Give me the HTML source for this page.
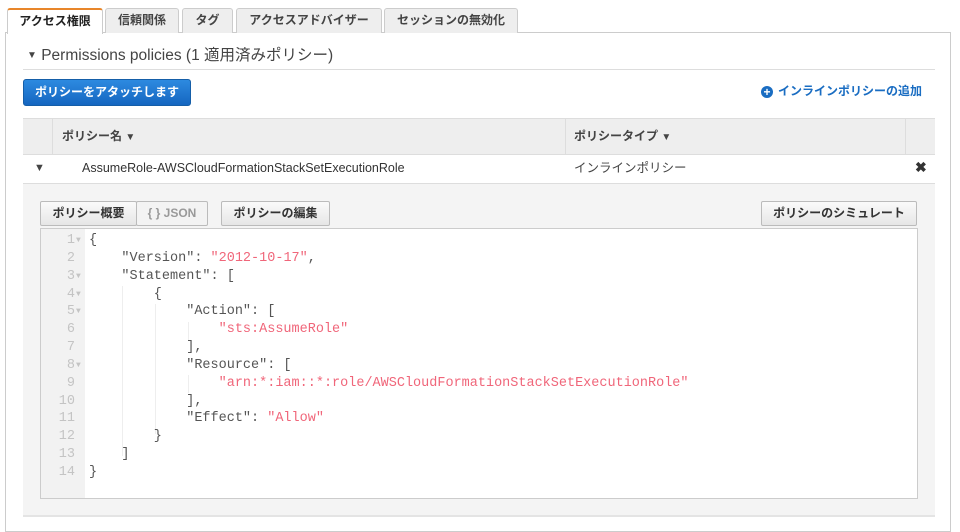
<!DOCTYPE html><html><head><meta charset="utf-8"><style>
*{box-sizing:border-box;margin:0;padding:0}
body{width:960px;height:526px;background:#fff;font-family:"Liberation Sans","Noto Sans CJK JP",sans-serif;color:#333;position:relative;overflow:hidden;font-size:13px;line-height:1.2}
.abs{position:absolute}
.tab{position:absolute;top:8px;height:25px;border:1px solid #ccc;border-bottom:none;background:#eee;border-radius:3px 3px 0 0;font-size:12px;font-weight:bold;color:#444;text-align:center;line-height:23px}
.btn{position:absolute;height:25px;border:1px solid #bbb;border-radius:2px;background:linear-gradient(#fafafa,#e6e6e6);font-size:12px;font-weight:bold;color:#333;text-align:center;line-height:23px}
.code{position:absolute;left:89px;top:232px;font-family:"Liberation Mono",monospace;font-size:13.5px;line-height:17.85px;color:#555;white-space:pre}
.s{color:#f0667a}
.ln{position:absolute;left:40px;top:232px;width:45px;font-family:"Liberation Mono",monospace;font-size:13.5px;color:#c4c4c4}
.ln div{height:17.85px;line-height:17.85px;position:relative}
.ln b{position:absolute;right:10px;font-weight:normal}
.ln i{position:absolute;left:36px;font-style:normal;font-size:8px;line-height:17px}
.g{position:absolute;width:1px;background:#eee}
</style></head><body>
<div class="abs" style="left:5px;top:32px;width:946px;height:500px;border:1px solid #ccc"></div>
<div class="tab" style="left:7px;width:96px;background:#fff;border-top:2px solid #e8862a;height:26px;color:#222">アクセス権限</div>
<div class="tab" style="left:105px;width:74px">信頼関係</div>
<div class="tab" style="left:182px;width:51px">タグ</div>
<div class="tab" style="left:236px;width:146px">アクセスアドバイザー</div>
<div class="tab" style="left:384px;width:134px">セッションの無効化</div>
<div class="abs" style="left:27px;top:47px;font-size:15.5px;color:#444"><span style="font-size:10px;vertical-align:2px">▼</span> Permissions policies (1 適用済みポリシー)</div>
<div class="abs" style="left:23px;top:69px;width:912px;height:1px;background:#ddd"></div>
<div class="abs" style="left:23px;top:79px;width:168px;height:27px;background:linear-gradient(#2d8ae0,#1566c0);border:1px solid #155ea8;border-radius:3px;color:#fff;font-size:12px;font-weight:bold;text-align:center;line-height:25px">ポリシーをアタッチします</div>
<div class="abs" style="left:761px;top:84px;font-size:12px;font-weight:bold;color:#1a6dc2"><span style="display:inline-block;width:12px;height:12px;border-radius:50%;background:#1a6dc2;color:#fff;font-size:12px;line-height:12px;text-align:center;margin-right:5px;vertical-align:-1px">+</span>インラインポリシーの追加</div>
<div class="abs" style="left:23px;top:118px;width:912px;height:37px;background:#eee;border-top:1px solid #ddd;border-bottom:1px solid #ddd"></div>
<div class="abs" style="left:52px;top:118px;width:1px;height:37px;background:#ddd"></div>
<div class="abs" style="left:565px;top:118px;width:1px;height:37px;background:#ddd"></div>
<div class="abs" style="left:905px;top:118px;width:1px;height:37px;background:#ddd"></div>
<div class="abs" style="left:62px;top:129px;font-size:12px;font-weight:bold;color:#444">ポリシー名 <span style="font-size:10px">▼</span></div>
<div class="abs" style="left:574px;top:129px;font-size:12px;font-weight:bold;color:#444">ポリシータイプ <span style="font-size:10px">▼</span></div>
<div class="abs" style="left:34px;top:162px;font-size:11px;color:#444">▼</div>
<div class="abs" style="left:82px;top:161px;font-size:12.5px;color:#333;line-height:15px">AssumeRole-AWSCloudFormationStackSetExecutionRole</div>
<div class="abs" style="left:574px;top:161px;font-size:12.5px;color:#444;line-height:15px">インラインポリシー</div>
<div class="abs" style="left:915px;top:159px;font-size:14px;font-weight:bold;color:#333">✖</div>
<div class="abs" style="left:23px;top:183px;width:912px;height:334px;background:#f4f4f4;border-top:1px solid #ddd;border-bottom:2px solid #e4e4e4"></div>
<div class="btn" style="left:40px;top:201px;width:97px">ポリシー概要</div>
<div class="btn" style="left:136px;top:201px;width:72px;background:#f3f3f3;color:#999">{ } JSON</div>
<div class="btn" style="left:221px;top:201px;width:109px">ポリシーの編集</div>
<div class="btn" style="left:761px;top:201px;width:156px">ポリシーのシミュレート</div>
<div class="abs" style="left:40px;top:228px;width:878px;height:271px;background:#fff;border:1px solid #ccc"></div>
<div class="abs" style="left:41px;top:229px;width:44px;height:269px;background:#f2f2f2"></div>
<div class="g" style="left:122px;top:286px;height:170px"></div>
<div class="g" style="left:155px;top:304px;height:130px"></div>
<div class="g" style="left:188px;top:322px;height:18px"></div>
<div class="g" style="left:188px;top:375px;height:18px"></div>
<div class="ln">
<div><b>1</b><i>▼</i></div>
<div><b>2</b></div>
<div><b>3</b><i>▼</i></div>
<div><b>4</b><i>▼</i></div>
<div><b>5</b><i>▼</i></div>
<div><b>6</b></div>
<div><b>7</b></div>
<div><b>8</b><i>▼</i></div>
<div><b>9</b></div>
<div><b>10</b></div>
<div><b>11</b></div>
<div><b>12</b></div>
<div><b>13</b></div>
<div><b>14</b></div>
</div>
<div class="code">{
    "Version": <span class="s">"2012-10-17"</span>,
    "Statement": [
        {
            "Action": [
                <span class="s">"sts:AssumeRole"</span>
            ],
            "Resource": [
                <span class="s">"arn:*:iam::*:role/AWSCloudFormationStackSetExecutionRole"</span>
            ],
            "Effect": <span class="s">"Allow"</span>
        }
    ]
}</div>
</body></html>
